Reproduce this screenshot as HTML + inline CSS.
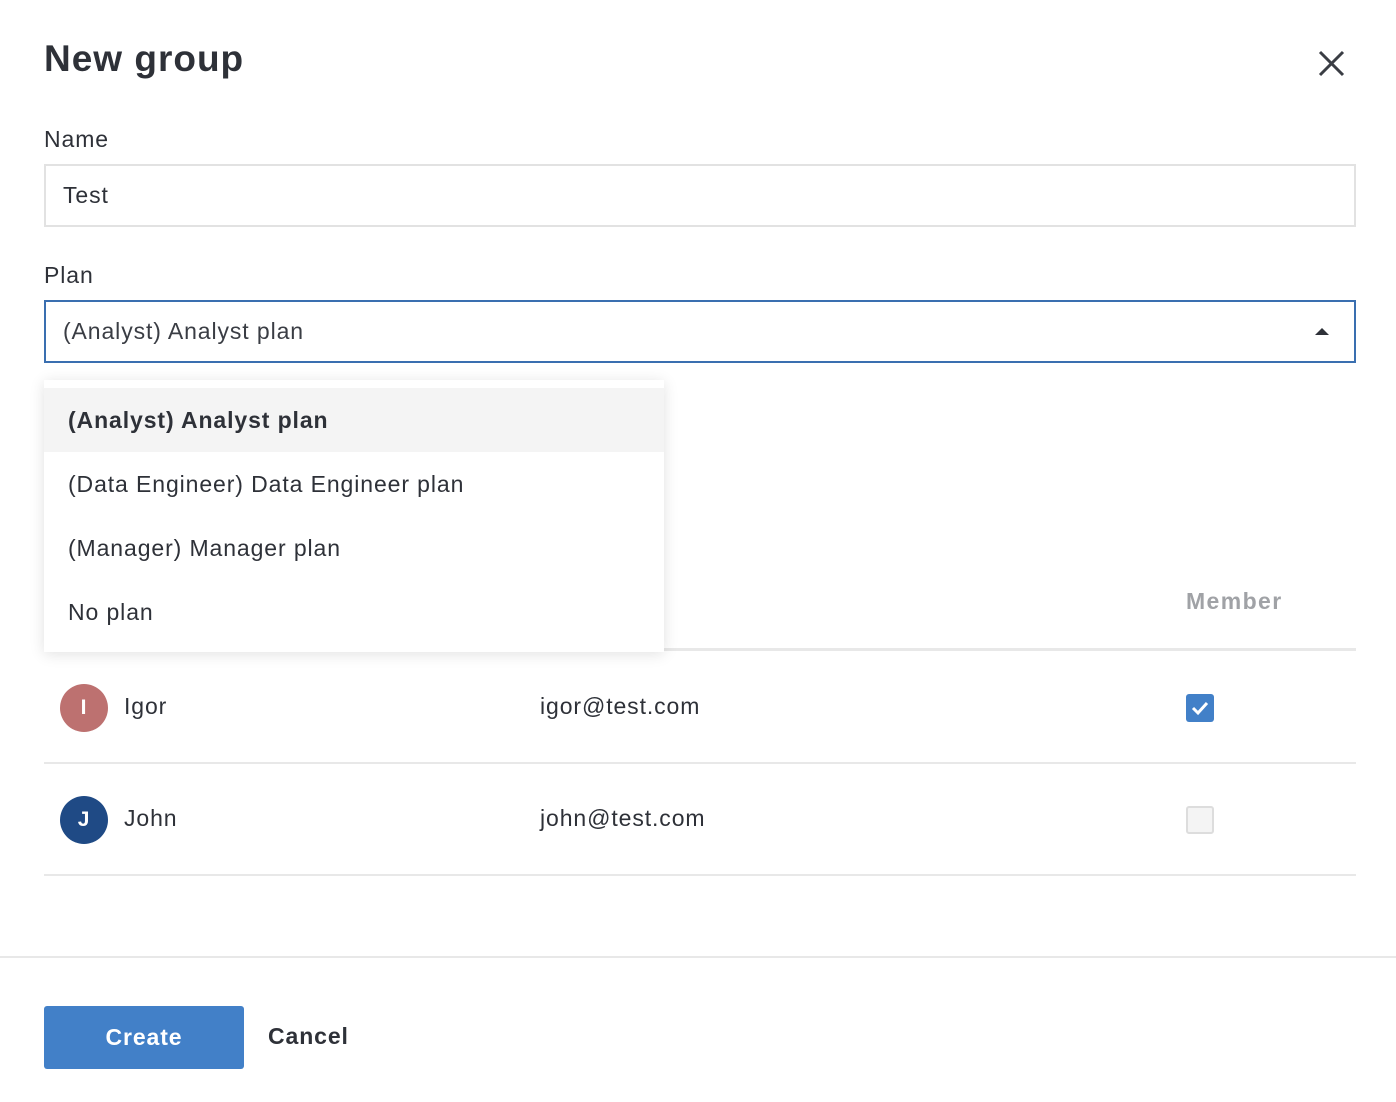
<!DOCTYPE html>
<html><head><style>
*{margin:0;padding:0;box-sizing:border-box}
body{width:1396px;height:1102px;background:#fff;font-family:"Liberation Sans",sans-serif;color:#2e3138;position:relative;overflow:hidden;letter-spacing:0.9px}
.a{position:absolute}
.lbl{font-size:23px;color:#2e3138}
.inp{left:44px;width:1312px;height:63px;border:2px solid #e2e2e2;font-size:23px;padding:0 17px;line-height:59px}
.item{position:absolute;left:0;width:620px;height:64px;line-height:64px;padding-left:24px;font-size:23px}
</style></head><body>
<div class="a" style="left:44px;top:38px;font-size:37px;font-weight:bold;color:#2e3138;letter-spacing:1px">New group</div>
<svg class="a" style="left:1318px;top:50px" width="27" height="27" viewBox="0 0 27 27"><path d="M2 2L25 25M25 2L2 25" stroke="#3a3d44" stroke-width="3"/></svg>
<div class="a lbl" style="left:44px;top:126px">Name</div>
<div class="a inp" style="top:164px">Test</div>
<div class="a lbl" style="left:44px;top:262px">Plan</div>
<div class="a inp" style="top:300px;border-color:#3a6fb0;color:#3a3d44">(Analyst) Analyst plan</div>
<svg class="a" style="left:1314px;top:327px" width="16" height="10"><path d="M1 8L8 1L15 8Z" fill="#2e3138"/></svg>
<div class="a" style="left:1186px;top:588px;font-size:23px;font-weight:bold;color:#a0a2a6;letter-spacing:1.4px">Member</div>
<div class="a" style="left:44px;top:648px;width:1312px;height:3px;background:#e8e8e8"></div>
<div class="a" style="left:60px;top:684px;width:48px;height:48px;border-radius:50%;background:#bd7170;color:#fff;font-weight:bold;font-size:21px;text-align:center;line-height:48px">I</div>
<div class="a" style="left:124px;top:693px;font-size:23px">Igor</div>
<div class="a" style="left:540px;top:693px;font-size:23px">igor@test.com</div>
<div class="a" style="left:1186px;top:694px;width:28px;height:28px;border-radius:3px;background:#4280c8"><svg width="28" height="28"><path d="M7 14L12 19L21 9" stroke="#fff" stroke-width="3" fill="none"/></svg></div>
<div class="a" style="left:44px;top:762px;width:1312px;height:2px;background:#e8e8e8"></div>
<div class="a" style="left:60px;top:796px;width:48px;height:48px;border-radius:50%;background:#1f4a85;color:#fff;font-weight:bold;font-size:21px;text-align:center;line-height:48px">J</div>
<div class="a" style="left:124px;top:805px;font-size:23px">John</div>
<div class="a" style="left:540px;top:805px;font-size:23px">john@test.com</div>
<div class="a" style="left:1186px;top:806px;width:28px;height:28px;border-radius:3px;background:#f4f4f4;border:2px solid #ddd"></div>
<div class="a" style="left:44px;top:874px;width:1312px;height:2px;background:#e8e8e8"></div>
<div class="a" style="left:0;top:956px;width:1396px;height:2px;background:#e8e8e8"></div>
<div class="a" style="left:44px;top:1006px;width:200px;height:63px;border-radius:3px;background:#4280c8;color:#fff;font-weight:bold;font-size:23px;text-align:center;line-height:63px">Create</div>
<div class="a" style="left:268px;top:1023px;font-size:23px;font-weight:bold;color:#2e3138">Cancel</div>
<div class="a" style="left:44px;top:380px;width:620px;height:272px;background:#fff;box-shadow:0 2px 14px rgba(0,0,0,0.12)">
<div class="item" style="top:8px;background:#f4f4f4;font-weight:bold">(Analyst) Analyst plan</div>
<div class="item" style="top:72px">(Data Engineer) Data Engineer plan</div>
<div class="item" style="top:136px">(Manager) Manager plan</div>
<div class="item" style="top:200px">No plan</div>
</div>
</body></html>
